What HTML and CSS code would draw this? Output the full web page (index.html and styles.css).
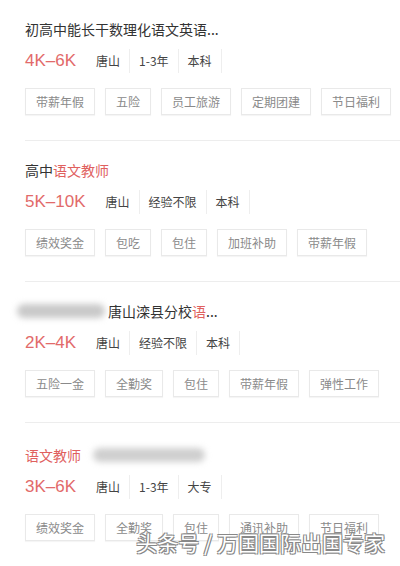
FILE: index.html
```html
<!DOCTYPE html>
<html lang="zh">
<head>
  <meta charset="UTF-8" />
  <meta name="viewport" content="width=device-width, initial-scale=1" />
  <title>职位列表</title>
  <link rel="stylesheet" href="styles.css">
</head>
<body>

  <ul class="jobs">
    <!-- 职位 1 -->
    <li class="job">
      <h3 class="job-title">初高中能长干数理化语文英语...</h3>
      <div class="job-info">
        <span class="salary">4K–6K</span>
        <span class="meta">唐山</span>
        <span class="meta">1-3年</span>
        <span class="meta">本科</span>
      </div>
      <div class="tags">
        <span class="tag">带薪年假</span>
        <span class="tag">五险</span>
        <span class="tag">员工旅游</span>
        <span class="tag">定期团建</span>
        <span class="tag">节日福利</span>
      </div>
    </li>

    <!-- 职位 2 -->
    <li class="job">
      <h3 class="job-title">高中<em>语文教师</em></h3>
      <div class="job-info">
        <span class="salary">5K–10K</span>
        <span class="meta">唐山</span>
        <span class="meta">经验不限</span>
        <span class="meta">本科</span>
      </div>
      <div class="tags">
        <span class="tag">绩效奖金</span>
        <span class="tag">包吃</span>
        <span class="tag">包住</span>
        <span class="tag">加班补助</span>
        <span class="tag">带薪年假</span>
      </div>
    </li>

    <!-- 职位 3 -->
    <li class="job">
      <h3 class="job-title job-title-blur"><span class="blur blur-lead"></span>唐山滦县分校<em>语</em>...</h3>
      <div class="job-info">
        <span class="salary">2K–4K</span>
        <span class="meta">唐山</span>
        <span class="meta">经验不限</span>
        <span class="meta">本科</span>
      </div>
      <div class="tags">
        <span class="tag">五险一金</span>
        <span class="tag">全勤奖</span>
        <span class="tag">包住</span>
        <span class="tag">带薪年假</span>
        <span class="tag">弹性工作</span>
      </div>
    </li>

    <!-- 职位 4 -->
    <li class="job">
      <h3 class="job-title"><em>语文教师</em><span class="blur blur-tail"></span></h3>
      <div class="job-info">
        <span class="salary">3K–6K</span>
        <span class="meta">唐山</span>
        <span class="meta">1-3年</span>
        <span class="meta">大专</span>
      </div>
      <div class="tags">
        <span class="tag">绩效奖金</span>
        <span class="tag">全勤奖</span>
        <span class="tag">包住</span>
        <span class="tag">通讯补助</span>
        <span class="tag">节日福利</span>
      </div>
    </li>
  </ul>

  <div class="watermark">头条号 / 万国国际出国专家</div>

</body>
</html>
```

FILE: styles.css
```css
body {
  margin: 0;
  padding: 0;
  background-color: #fff;
  color: #333;
  font-family: "Noto Sans CJK SC", "Noto Sans", sans-serif;
  overflow: hidden;
}

.jobs {
  list-style: none;
  margin: 0;
  padding: 0 0 0 25px;
}

.job {
  padding: 19px 0 25px;
  border-bottom: 1px solid #ededed;
}

.job:last-child {
  padding-top: 22px;
}

.job-title {
  margin: 0;
  font-size: 14px;
  font-weight: normal;
  line-height: 20px;
  color: #333;
  display: flex;
  align-items: center;
  white-space: nowrap;
}

.job-title em {
  font-style: normal;
  color: #e0605e;
}

.job-title-blur {
  margin-left: -8px;
}

.blur {
  display: inline-block;
  height: 14px;
  background-color: #c9c9c9;
  border-radius: 7px;
  filter: blur(3px);
}

.blur-lead {
  width: 88px;
  margin-right: 3px;
}

.blur-tail {
  width: 112px;
  margin-left: 12px;
  background-color: #cfcfcf;
}

.job-info {
  display: flex;
  align-items: center;
  margin-top: 10px;
  height: 24px;
}

.salary {
  font-family: "Liberation Sans", Arial, sans-serif;
  font-size: 17px;
  color: #e26a6a;
  margin-right: 11px;
}

.meta {
  font-size: 12px;
  color: #444;
  padding: 0 9px;
  height: 24px;
  line-height: 24px;
  border-right: 1px solid #eeeeee;
}

.tags {
  display: flex;
  gap: 10px;
  margin-top: 15px;
}

.tag {
  flex-shrink: 0;
  white-space: nowrap;
  font-size: 12px;
  color: #8a8a8a;
  padding: 0 10px;
  height: 25px;
  line-height: 25px;
  border: 1px solid #e9e9e9;
  box-shadow: 0 1px 1px rgba(0,0,0,0.04);
}

.watermark {
  position: absolute;
  right: 15px;
  bottom: 9px;
  font-size: 21px;
  color: #fff;
  text-shadow:
    -1px -1px 0 #888, 1px -1px 0 #888,
    -1px 1px 0 #888, 1px 1px 0 #888;
}
```
